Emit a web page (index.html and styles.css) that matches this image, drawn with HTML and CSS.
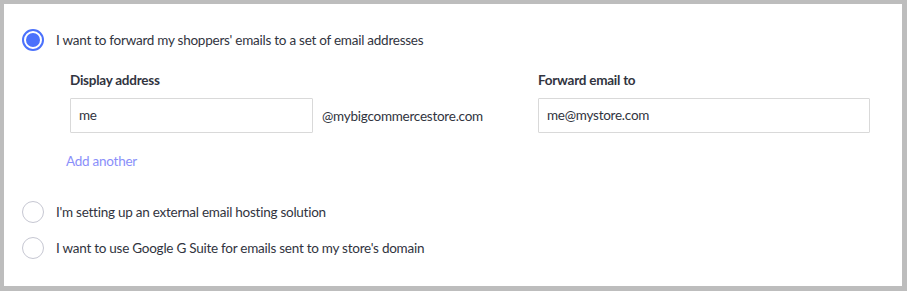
FILE: index.html
```html
<!DOCTYPE html>
<html lang="en">
<head>
  <meta charset="UTF-8" />
  <meta name="viewport" content="width=device-width, initial-scale=1.0"/>
  <title>Email forwarding</title>
  <link rel="stylesheet" href="styles.css">
</head>
<body>
  <div class="panel">
    <label class="option">
      <span class="radio checked"></span>
      <span class="option-text">I want to forward my shoppers' emails to a set of email addresses</span>
    </label>

    <div class="forward-box">
      <div class="field-grid">
        <div class="field-label">Display address</div>
        <div></div>
        <div class="field-label">Forward email to</div>

        <div class="input">me</div>
        <div class="suffix">@mybigcommercestore.com</div>
        <div class="input">me@mystore.com</div>
      </div>
      <a class="add-link" href="#">Add another</a>
    </div>

    <label class="option second">
      <span class="radio"></span>
      <span class="option-text">I'm setting up an external email hosting solution</span>
    </label>
    <label class="option third">
      <span class="radio"></span>
      <span class="option-text">I want to use Google G Suite for emails sent to my store's domain</span>
    </label>
  </div>
</body>
</html>
```

FILE: styles.css
```css
* { box-sizing: border-box; margin: 0; padding: 0; }
body {
  font-family: 'Lato', 'Open Sans', sans-serif;
  font-size: 13.5px;
  letter-spacing: -0.25px;
  color: #313440;
  background: #bdbdbd;
  padding: 4px 5px 5px 4px;
  width: 907px;
  height: 291px;
}
.panel {
  background: #fff;
  height: 282px;
  padding: 25px 32px 27px 18px;
}
.option {
  display: flex;
  align-items: center;
  height: 22px;
  cursor: pointer;
}
.option.second { margin-top: 30px; }
.option.third { margin-top: 14px; }
.radio {
  width: 22px;
  height: 22px;
  border-radius: 50%;
  border: 1px solid #c6c7d2;
  background: #fff;
  flex: 0 0 22px;
  margin-right: 12px;
}
.radio.checked {
  border: 2px solid #4b71fc;
  padding: 2px;
  background: #4b71fc;
  background-clip: content-box;
}
.option-text {
  line-height: 20px;
}
.forward-box {
  padding-left: 48px;
  margin-top: 19px;
}
.field-grid {
  display: grid;
  grid-template-columns: 243px 1fr 332px;
  column-gap: 9px;
  row-gap: 8px;
  align-items: center;
}
.field-label {
  font-weight: 700;
  line-height: 20px;
}
.input {
  height: 35px;
  border: 1px solid #d9d9d9;
  border-radius: 1px;
  padding: 0 8px;
  line-height: 33px;
}
.add-link {
  display: inline-block;
  margin-top: 18px;
  margin-left: -4px;
  line-height: 20px;
  color: #8a8ffa;
  text-decoration: none;
}
```
